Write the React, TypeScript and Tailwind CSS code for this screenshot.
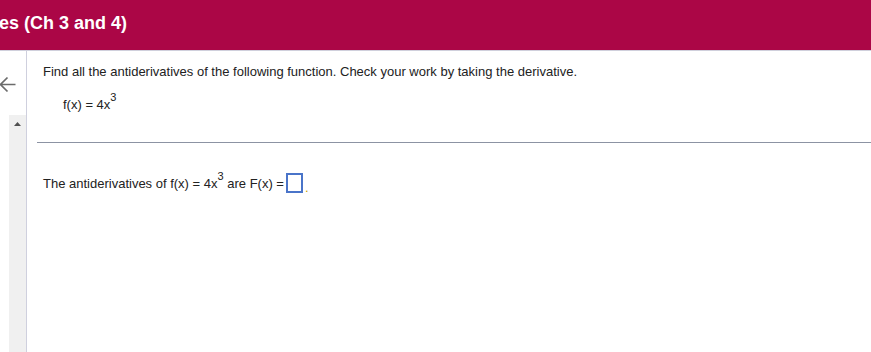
export default function App() {
  return (
    <div className="w-[871px] h-[352px] overflow-hidden bg-white font-['Liberation_Sans',Arial,sans-serif] text-[#222]">
      <header className="h-[50px] bg-[#ab0646] flex items-center">
        <h1 className="-ml-[1px] -mt-[4px] text-white font-bold text-[18px] whitespace-nowrap">
          es (Ch 3 and 4)
        </h1>
      </header>
      <div className="h-[1px] bg-[#d0d0dc]" />
      <div className="flex h-[301px]">
        <aside className="w-[27px] shrink-0 border-r border-[#cfd0de] flex flex-col">
          <div className="h-[64px] flex items-start pt-[25px]">
            <svg width="17" height="17" viewBox="0 0 17 17" className="ml-[-1px]">
              <path d="M16.5 8.5H1.5M8.5 1.5L1.5 8.5L8.5 15.5" stroke="#6b6b6b" strokeWidth="1.7" fill="none" />
            </svg>
          </div>
          <div className="flex-1 ml-[9px] bg-[#f0f0f0] flex justify-center pt-[7px]">
            <svg width="7" height="4" viewBox="0 0 7 4">
              <path d="M0 4L3.5 0L7 4Z" fill="#505050" />
            </svg>
          </div>
        </aside>
        <main className="flex-1 relative">
          <p className="pl-[16px] pt-[13px] text-[13px] leading-[15px]">
            Find all the antiderivatives of the following function. Check your work by taking the derivative.
          </p>
          <p className="pl-[36px] pt-[18px] text-[13px] leading-[15px]">
            f(x) = 4x<sup className="text-[11px] relative -top-[8px]">3</sup>
          </p>
          <div className="ml-[10px] mt-[30px] h-[1px] bg-[#8c93a3]" />
          <p className="pl-[16px] pt-[30px] text-[13px] leading-[15px] flex items-center">
            <span>
              The antiderivatives of f(x) = 4x<sup className="text-[11px] relative -top-[8px]">3</sup> are F(x) =
            </span>
            <span className="inline-block ml-[2px] w-[17px] h-[20px] border-[2px] border-[#4a74c9]" />
            <span className="ml-[2px] text-[#c8a000] self-end leading-[10px]">.</span>
          </p>
        </main>
      </div>
    </div>
  );
}
